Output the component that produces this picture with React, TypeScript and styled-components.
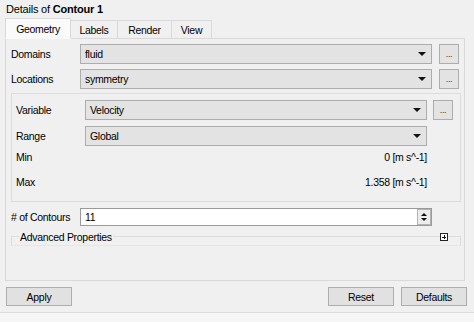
import React from 'react'
import styled, { createGlobalStyle } from 'styled-components'

const GlobalStyle = createGlobalStyle`
  html, body {
    margin: 0;
    padding: 0;
    background: #f0f0f0;
  }
`

const FONT = `"Liberation Sans", Arial, sans-serif`

const Window = styled.div`
  width: 474px;
  height: 322px;
  background: #f0f0f0;
  font-family: ${FONT};
  font-size: 10.5px;
  letter-spacing: -0.3px;
  color: #000;
  display: flex;
  flex-direction: column;
  overflow: hidden;
`

const Title = styled.div`
  height: 18px;
  line-height: 18px;
  padding-left: 6px;
  font-size: 11px;
  letter-spacing: -0.2px;
  b {
    font-weight: 700;
  }
`

const TabBar = styled.div`
  display: flex;
  align-items: flex-end;
  height: 20px;
  padding-left: 5px;
  position: relative;
  z-index: 1;
`

const Tab = styled.div<{ $active?: boolean; $w: number }>`
  width: ${(p) => p.$w}px;
  height: ${(p) => (p.$active ? 21 : 18)}px;
  margin-bottom: ${(p) => (p.$active ? -1 : 0)}px;
  box-sizing: border-box;
  border: 1px solid #d9d9d9;
  border-bottom: ${(p) => (p.$active ? '1px solid #fafafa' : 'none')};
  border-left-width: ${(p) => (p.$active ? 1 : 0)}px;
  background: ${(p) => (p.$active ? '#fafafa' : '#f0f0f0')};
  display: flex;
  align-items: center;
  justify-content: center;
`

const Panel = styled.div`
  margin: 0 9px 0 5px;
  height: 243px;
  box-sizing: border-box;
  border: 1px solid #d9d9d9;
  background: #f0f0f0;
  padding: 5px 0 0 5px;
  display: flex;
  flex-direction: column;
`

const Row = styled.div<{ $mt?: number }>`
  display: flex;
  align-items: center;
  margin-top: ${(p) => p.$mt ?? 0}px;
`

const Label = styled.div<{ $w: number }>`
  width: ${(p) => p.$w}px;
  flex: none;
`

const Combo = styled.div<{ $w: number }>`
  width: ${(p) => p.$w}px;
  height: 20px;
  box-sizing: border-box;
  border: 1px solid #adadad;
  background: #e3e3e3;
  display: flex;
  align-items: center;
  padding: 0 5px 0 4px;
  flex: none;
  span {
    flex: 1;
  }
`

const Arrow = styled.div`
  width: 0;
  height: 0;
  border-left: 4px solid transparent;
  border-right: 4px solid transparent;
  border-top: 4px solid #111;
`

const Dots = styled.div<{ $ml: number }>`
  width: 20px;
  height: 20px;
  margin-left: ${(p) => p.$ml}px;
  box-sizing: border-box;
  border: 1px solid #adadad;
  background: #e3e3e3;
  display: flex;
  align-items: flex-end;
  justify-content: center;
  padding-bottom: 4px;
  font-size: 9px;
  line-height: 9px;
  color: #333;
  flex: none;
`

const Group = styled.div`
  margin-top: 4px;
  width: 450px;
  height: 109px;
  box-sizing: border-box;
  border: 1px solid #dcdcdc;
  padding: 6px 0 0 4px;
  display: flex;
  flex-direction: column;
`

const ValueRow = styled.div<{ $mt: number }>`
  display: flex;
  height: 14px;
  align-items: center;
  margin-top: ${(p) => p.$mt}px;
  width: 411px;
  span:last-child {
    margin-left: auto;
  }
`

const Spin = styled.div`
  width: 352px;
  height: 18px;
  box-sizing: border-box;
  border: 1px solid #9a9a9a;
  background: #fff;
  display: flex;
  align-items: center;
  padding-left: 4px;
  span {
    flex: 1;
  }
`

const SpinButtons = styled.div`
  width: 14px;
  height: 16px;
  box-sizing: border-box;
  border: 1px solid #b4b4b4;
  background: #ececec;
  display: flex;
  flex-direction: column;
  align-items: center;
  justify-content: space-evenly;
`

const SpinArrow = styled.div<{ $up?: boolean }>`
  width: 0;
  height: 0;
  border-left: 3px solid transparent;
  border-right: 3px solid transparent;
  ${(p) => (p.$up ? 'border-bottom: 3px solid #111;' : 'border-top: 3px solid #111;')}
`

const Advanced = styled.div`
  margin-top: 10px;
  width: 450px;
  height: 10px;
  box-sizing: border-box;
  border: 1px solid #dcdcdc;
  border-bottom-color: #e6e6e6;
  position: relative;
`

const AdvancedTitle = styled.span`
  position: absolute;
  left: 7px;
  top: -6px;
  padding: 0 1px;
  line-height: 12px;
  background: #f0f0f0;
`

const Expand = styled.div`
  position: absolute;
  right: 12px;
  top: -4px;
  width: 8px;
  height: 8px;
  box-sizing: border-box;
  border: 1px solid #222;
  background: #fff;
  display: flex;
  align-items: center;
  justify-content: center;
  &::before,
  &::after {
    content: '';
    position: absolute;
    background: #111;
  }
  &::before {
    width: 4px;
    height: 1px;
  }
  &::after {
    width: 1px;
    height: 4px;
  }
`

const Footer = styled.div`
  display: flex;
  align-items: center;
  height: 32px;
  padding: 0 7px 0 6px;
  box-sizing: border-box;
  gap: 7px;
  border-bottom: 1px solid #dcdcdc;
`

const Button = styled.div<{ $push?: boolean }>`
  width: 66px;
  height: 19px;
  box-sizing: border-box;
  border: 1px solid #adadad;
  background: #e1e1e1;
  display: flex;
  align-items: center;
  justify-content: center;
  margin-left: ${(p) => (p.$push ? 'auto' : '0')};
`

const Bottom = styled.div`
  flex: 1;
  background: #f6f6f6;
`

const ComboRow: React.FC<{ label: string; value: string; w: number; mt?: number; dots?: number }> = ({
  label, value, w, mt, dots,
}) => (
  <Row $mt={mt}>
    <Label $w={69}>{label}</Label>
    <Combo $w={w}>
      <span>{value}</span>
      <Arrow />
    </Combo>
    {dots !== undefined && <Dots $ml={dots}>...</Dots>}
  </Row>
)

export default function App() {
  return (
    <Window>
      <GlobalStyle />
      <Title>
        Details of <b>Contour 1</b>
      </Title>
      <TabBar>
        <Tab $active $w={66}>Geometry</Tab>
        <Tab $w={47}>Labels</Tab>
        <Tab $w={54}>Render</Tab>
        <Tab $w={40}>View</Tab>
      </TabBar>
      <Panel>
        <ComboRow label="Domains" value="fluid" w={352} dots={7} />
        <ComboRow label="Locations" value="symmetry" w={352} mt={5} dots={7} />
        <Group>
          <ComboRow label="Variable" value="Velocity" w={342} dots={6} />
          <ComboRow label="Range" value="Global" w={342} mt={6} />
          <ValueRow $mt={4}>
            <span>Min</span>
            <span>0 [m s^-1]</span>
          </ValueRow>
          <ValueRow $mt={11}>
            <span>Max</span>
            <span>1.358 [m s^-1]</span>
          </ValueRow>
        </Group>
        <Row $mt={6}>
          <Label $w={69}># of Contours</Label>
          <Spin>
            <span>11</span>
            <SpinButtons>
              <SpinArrow $up />
              <SpinArrow />
            </SpinButtons>
          </Spin>
        </Row>
        <Advanced>
          <AdvancedTitle>Advanced Properties</AdvancedTitle>
          <Expand />
        </Advanced>
      </Panel>
      <Footer>
        <Button>Apply</Button>
        <Button $push>Reset</Button>
        <Button>Defaults</Button>
      </Footer>
      <Bottom />
    </Window>
  )
}
